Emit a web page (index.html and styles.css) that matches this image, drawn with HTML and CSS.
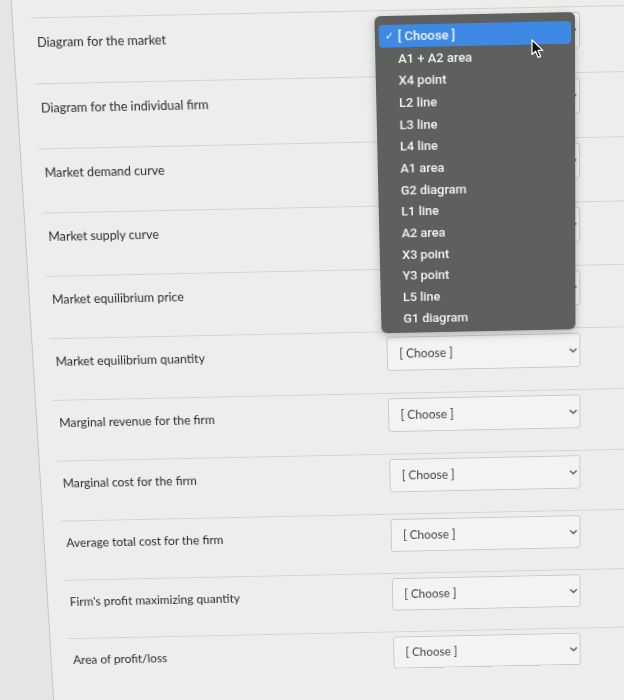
FILE: index.html
```html
<!DOCTYPE html>
<html lang="en">
<head>
    <meta charset="UTF-8">
    <meta name="viewport" content="width=device-width, initial-scale=1.0">
    <title>Matching question</title>
    <link rel="stylesheet" href="styles.css">
</head>
<body>
    <div class="sheet">
        <div class="answers">
            <div class="row">
                <div class="label">Diagram for the market</div>
                <div class="select"><span>[ Choose ]</span><svg class="chev" width="9" height="6" viewBox="0 0 9 6"><path d="M1 1 L4.5 4.5 L8 1" /></svg></div>
            </div>
            <div class="row">
                <div class="label">Diagram for the individual firm</div>
                <div class="select"><span>[ Choose ]</span><svg class="chev" width="9" height="6" viewBox="0 0 9 6"><path d="M1 1 L4.5 4.5 L8 1" /></svg></div>
            </div>
            <div class="row">
                <div class="label">Market demand curve</div>
                <div class="select"><span>[ Choose ]</span><svg class="chev" width="9" height="6" viewBox="0 0 9 6"><path d="M1 1 L4.5 4.5 L8 1" /></svg></div>
            </div>
            <div class="row">
                <div class="label">Market supply curve</div>
                <div class="select"><span>[ Choose ]</span><svg class="chev" width="9" height="6" viewBox="0 0 9 6"><path d="M1 1 L4.5 4.5 L8 1" /></svg></div>
            </div>
            <div class="row">
                <div class="label">Market equilibrium price</div>
                <div class="select"><span>[ Choose ]</span><svg class="chev" width="9" height="6" viewBox="0 0 9 6"><path d="M1 1 L4.5 4.5 L8 1" /></svg></div>
            </div>
            <div class="row">
                <div class="label">Market equilibrium quantity</div>
                <div class="select"><span>[ Choose ]</span><svg class="chev" width="9" height="6" viewBox="0 0 9 6"><path d="M1 1 L4.5 4.5 L8 1" /></svg></div>
            </div>
            <div class="row">
                <div class="label">Marginal revenue for the firm</div>
                <div class="select"><span>[ Choose ]</span><svg class="chev" width="9" height="6" viewBox="0 0 9 6"><path d="M1 1 L4.5 4.5 L8 1" /></svg></div>
            </div>
            <div class="row">
                <div class="label">Marginal cost for the firm</div>
                <div class="select"><span>[ Choose ]</span><svg class="chev" width="9" height="6" viewBox="0 0 9 6"><path d="M1 1 L4.5 4.5 L8 1" /></svg></div>
            </div>
            <div class="row">
                <div class="label">Average total cost for the firm</div>
                <div class="select"><span>[ Choose ]</span><svg class="chev" width="9" height="6" viewBox="0 0 9 6"><path d="M1 1 L4.5 4.5 L8 1" /></svg></div>
            </div>
            <div class="row">
                <div class="label">Firm's profit maximizing quantity</div>
                <div class="select"><span>[ Choose ]</span><svg class="chev" width="9" height="6" viewBox="0 0 9 6"><path d="M1 1 L4.5 4.5 L8 1" /></svg></div>
            </div>
            <div class="row last">
                <div class="label">Area of profit/loss</div>
                <div class="select"><span>[ Choose ]</span><svg class="chev" width="9" height="6" viewBox="0 0 9 6"><path d="M1 1 L4.5 4.5 L8 1" /></svg></div>
            </div>
        </div>

        <div class="popup">
            <div class="item active"><span class="check">&#10003;</span>[ Choose ]</div>
            <div class="item"><span class="check"></span>A1 + A2 area</div>
            <div class="item"><span class="check"></span>X4 point</div>
            <div class="item"><span class="check"></span>L2 line</div>
            <div class="item"><span class="check"></span>L3 line</div>
            <div class="item"><span class="check"></span>L4 line</div>
            <div class="item"><span class="check"></span>A1 area</div>
            <div class="item"><span class="check"></span>G2 diagram</div>
            <div class="item"><span class="check"></span>L1 line</div>
            <div class="item"><span class="check"></span>A2 area</div>
            <div class="item"><span class="check"></span>X3 point</div>
            <div class="item"><span class="check"></span>Y3 point</div>
            <div class="item"><span class="check"></span>L5 line</div>
            <div class="item"><span class="check"></span>G1 diagram</div>
        </div>
    </div>

    <svg class="cursor" width="14" height="20" viewBox="0 0 14 20">
        <path d="M1 1 L1 15.5 L4.6 12.2 L7.2 18.4 L9.6 17.4 L7 11.4 L11.8 11.4 Z" />
    </svg>
</body>
</html>
```

FILE: styles.css
```css
body {
    margin: 0;
    background: #e5e5e3;
    font-family: 'Lato', 'Liberation Sans', sans-serif;
    color: #2e2e2e;
    overflow: hidden;
    height: 700px;
}

/* the whole page is tilted a little, as in the photo */
.sheet {
    position: relative;
    width: 720px;
    height: 860px;
    margin-top: -40px;
    transform-origin: 390px 40px;
    transform: rotate(-1.2deg) perspective(1000px) rotateX(-6deg);
}

.answers {
    margin-left: 11px;
    height: 100%;
    padding-top: 50px;
    box-sizing: border-box;
    background: #ededeb;
    border-left: 1px solid #c4c4c2;
}

.row {
    display: flex;
    align-items: center;
    margin-left: 18px;
    padding: 5px 0 24px;
    border-top: 1px solid #d3d3d1;
}

.label {
    flex: 0 0 344px;
    padding-left: 5px;
    font-size: 12.7px;
}

.select {
    flex: 0 0 201px;
    height: 37px;
    box-sizing: border-box;
    display: flex;
    align-items: center;
    justify-content: space-between;
    padding: 0 2px 0 12px;
    background: #f3f3f1;
    border: 1px solid #c9c9c7;
    border-radius: 3px;
    font-size: 12.5px;
    color: #444;
}

.chev path {
    fill: none;
    stroke: #555;
    stroke-width: 1.5;
}

.popup {
    position: absolute;
    left: 374px;
    top: 56px;
    width: 201px;
    padding: 9px 0 4px;
    background: #5e5f5f;
    border-radius: 6px;
    box-shadow: 0 3px 10px rgba(0, 0, 0, 0.25);
    font-family: 'Roboto', 'Liberation Sans', sans-serif;
    font-weight: 500;
    font-size: 13px;
    color: #f4f4f4;
}

.item {
    display: flex;
    align-items: center;
    height: 22.7px;
    margin: 0 4px;
    padding-left: 6px;
    border-radius: 4px;
}

.item.active {
    background: #3e89e3;
}

.check {
    width: 13px;
    font-size: 11px;
}

.cursor {
    position: absolute;
    left: 531px;
    top: 39px;
}

.cursor path {
    fill: #111;
    stroke: #fff;
    stroke-width: 1.2;
    stroke-linejoin: round;
}
```
